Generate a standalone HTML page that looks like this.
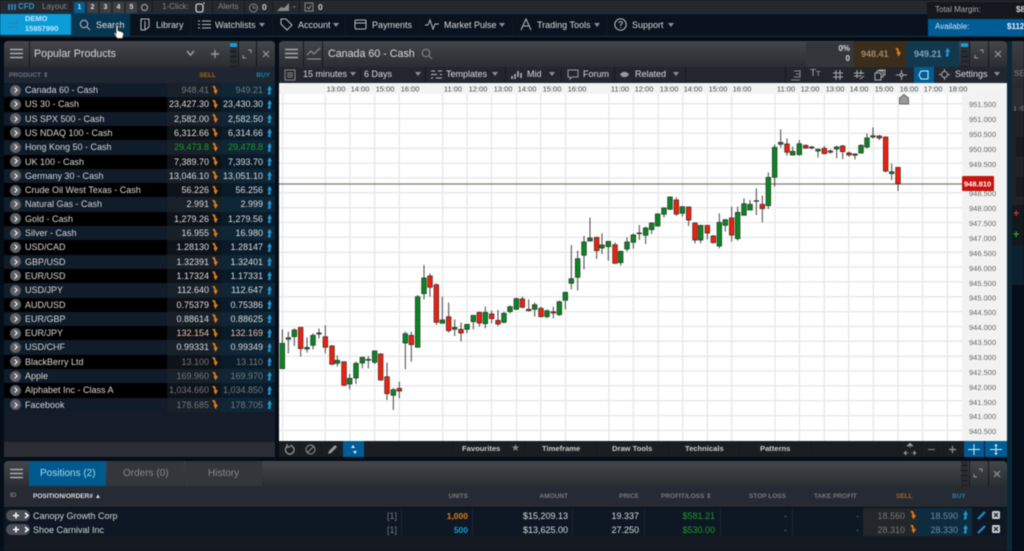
<!DOCTYPE html>
<html lang="en">
<head>
<meta charset="utf-8">
<title>CFD Platform</title>
<style>
html,body{margin:0;padding:0;background:#050d18;}
body{width:1024px;height:551px;overflow:hidden;position:relative;font-family:"Liberation Sans",sans-serif;font-size:9px;color:#ddd;}
#w{position:absolute;left:0;top:0;width:1024px;height:551px;overflow:hidden;filter:blur(.45px);background:#050d18;}
.a{position:absolute;}
.t{position:absolute;white-space:nowrap;line-height:12px;}
.hd{background:linear-gradient(#43464b,#2a2d32);}
.sep{position:absolute;width:1px;background:#15181c;}
svg{position:absolute;overflow:visible;}
.ic{fill:none;stroke:#bbb;stroke-width:1;}
.ar{position:absolute;width:0;height:0;border-left:3px solid transparent;border-right:3px solid transparent;border-top:4px solid #8a9098;}
.num{position:absolute;top:2px;width:11px;height:11px;background:#3c3f44;color:#ddd;font-size:7px;font-weight:bold;line-height:11px;text-align:center;}
.r{position:absolute;left:4px;width:271px;height:14.3px;background:#000;line-height:14px;}
.r.o{background:#101c29;}
.r .bt{position:absolute;left:6px;top:1.6px;width:11px;height:11px;border-radius:50%;background:#5b5f64;}
.r .bt::after{content:"";position:absolute;left:2.6px;top:3.4px;width:3px;height:3px;border:solid #fff;border-width:1.4px 1.4px 0 0;transform:rotate(45deg);}
.r .n{position:absolute;left:21px;top:0;color:#d8d8d8;white-space:nowrap;}
.r .s,.r .b{position:absolute;top:0;width:54px;height:14.3px;text-align:right;box-sizing:border-box;color:#ddd;}
.r .s{left:163px;padding-right:12px;background:#0e1319;}
.r .b{left:217px;padding-right:12px;background:#091b29;}
.r.o .s{background:#182029;}
.r.o .b{background:#0f2636;}
.r .s::after,.p::after{content:"";position:absolute;right:3px;top:2.5px;width:6px;height:9px;background:#d9801c;clip-path:polygon(0 0,45% 0,75% 50%,100% 50%,60% 100%,25% 55%,45% 50%);}
.r .b::after,.q::after{content:"";position:absolute;right:3px;top:2.5px;width:6px;height:9px;background:#1f9ad6;clip-path:polygon(60% 0,100% 50%,75% 50%,75% 100%,30% 100%,45% 50%,20% 50%);}
.g{color:#777 !important;}
.gr{color:#1f9a25 !important;}
.ch{position:absolute;top:441px;height:16px;background:#1a1d22;}
.cap{position:absolute;color:#777;font-size:6.5px;font-weight:bold;line-height:10px;white-space:nowrap;}
.sl{position:absolute;background:#2a2c30;background-image:repeating-linear-gradient(#2a2c30 0,#2a2c30 4px,#16181b 4px,#16181b 5px);}
</style>
</head>
<body>
<div id="w">

<!-- top bar -->
<div class="a" style="left:0;top:0;width:1024px;height:13px;background:#25282d"></div>
<div class="t" style="left:18px;top:1px;color:#2d97cf;font-size:8px;font-weight:bold">CFD</div>
<svg style="left:8px;top:3px" width="9" height="8"><path d="M1 1V7M4 1V7M7 1V7" stroke="#2d97cf" stroke-width="1.5"/></svg>
<div class="t" style="left:42px;top:1px;color:#888;font-size:8px">Layout:</div>
<div class="num" style="left:74px;background:#005f94">1</div>
<div class="num" style="left:87px">2</div>
<div class="num" style="left:100px">3</div>
<div class="num" style="left:113px">4</div>
<div class="num" style="left:126px">5</div>
<svg style="left:139px;top:2px" width="11" height="11"><circle cx="5.5" cy="5.5" r="3" fill="none" stroke="#888" stroke-width="1.5"/></svg>
<div class="t" style="left:162px;top:1px;color:#888;font-size:8px">1-Click:</div>
<svg style="left:195px;top:1px" width="11" height="12"><rect x="1" y="3" width="7" height="8" rx="2" fill="none" stroke="#ccc" stroke-width="1.3"/><path d="M9 1V3" stroke="#ccc"/></svg>
<div class="t" style="left:218px;top:1px;color:#888;font-size:8px">Alerts</div>
<svg style="left:248px;top:2px" width="11" height="11"><circle cx="5.5" cy="6" r="4" fill="none" stroke="#888"/><path d="M5.5 3.5V6H8" stroke="#888" fill="none"/></svg>
<div class="t" style="left:262px;top:1px;color:#ccc;font-size:8.5px;font-weight:bold">0</div>
<svg style="left:276px;top:2px" width="14" height="10"><path d="M1 9L5 5L8 6L13 1V9Z" fill="#888"/></svg>
<div class="t" style="left:293px;top:1px;color:#ccc;font-size:8px">-</div>
<svg style="left:304px;top:2px" width="10" height="10"><rect x="1" y="1" width="8" height="8" fill="none" stroke="#888"/><path d="M3 5L5 7L7 3" fill="none" stroke="#888"/></svg>
<div class="t" style="left:318px;top:1px;color:#ccc;font-size:8.5px;font-weight:bold">0</div>
<div class="sep" style="left:70px;top:0;height:13px"></div>
<div class="sep" style="left:152px;top:0;height:13px"></div>
<div class="sep" style="left:212px;top:0;height:13px"></div>
<div class="sep" style="left:244px;top:0;height:13px"></div>
<div class="sep" style="left:272px;top:0;height:13px"></div>
<div class="sep" style="left:299px;top:0;height:13px"></div>

<!-- nav -->
<div class="a" style="left:0;top:13px;width:1024px;height:1px;background:#0d3a50"></div>
<div class="a" style="left:0;top:14px;width:1024px;height:22px;background:#0a121e"></div>
<div class="a" style="left:0;top:36px;width:1024px;height:1px;background:#0d3a50"></div>
<div class="a" style="left:0;top:37px;width:1024px;height:4px;background:#05090f"></div>
<div class="a" style="left:0;top:14px;width:71px;height:21px;background:#0c9dd9"></div>
<svg style="left:6px;top:18px" width="14" height="14"><path d="M2 5H12L9 2M12 9H2L5 12" fill="none" stroke="#2a86b4" stroke-width="1.2"/></svg>
<div class="t" style="left:25px;top:14px;color:#bfe7f8;font-size:7.5px;font-weight:bold;line-height:10px">DEMO<br>15857990</div>
<div class="a" style="left:71px;top:14px;width:59px;height:22px;background:#07344f"></div>
<svg class="ic" style="left:79px;top:19px" width="12" height="12"><circle cx="5" cy="5" r="3.7"/><path d="M8 8L11 11"/></svg>
<div class="t" style="left:96px;top:19px;color:#e4e4e4">Search</div>
<svg class="ic" style="left:139px;top:18px" width="12" height="13"><path d="M2 1H10V9L6 12H2Z"/><path d="M6 3V12"/></svg>
<div class="t" style="left:156px;top:19px;color:#ddd">Library</div>
<svg class="ic" style="left:198px;top:19px" width="13" height="11"><path d="M0 2H2M4 2H13M0 5.5H2M4 5.5H13M0 9H2M4 9H13"/></svg>
<div class="t" style="left:215px;top:19px;color:#ddd">Watchlists</div><div class="ar" style="left:259px;top:23px"></div>
<svg class="ic" style="left:280px;top:18px" width="13" height="13"><path d="M1 1H6L12 7L7 12L1 6Z"/></svg>
<div class="t" style="left:298px;top:19px;color:#ddd">Account</div><div class="ar" style="left:333px;top:23px"></div>
<svg class="ic" style="left:354px;top:19px" width="13" height="11"><rect x="1" y="1" width="11" height="9" rx="1"/><path d="M1 4H12"/></svg>
<div class="t" style="left:372px;top:19px;color:#ddd">Payments</div>
<svg class="ic" style="left:425px;top:19px" width="14" height="11"><path d="M0 6H3L5 1L8 10L10 5H14"/></svg>
<div class="t" style="left:444px;top:19px;color:#ddd">Market Pulse</div><div class="ar" style="left:499px;top:23px"></div>
<svg class="ic" style="left:520px;top:18px" width="12" height="13"><path d="M1 12L6 1L11 12M3.5 8H8.5"/></svg>
<div class="t" style="left:537px;top:19px;color:#ddd">Trading Tools</div><div class="ar" style="left:594px;top:23px"></div>
<svg class="ic" style="left:614px;top:18px" width="13" height="13"><circle cx="6.5" cy="6.5" r="5.7"/><path d="M4.8 5C5 3.2 8.3 3.2 8.3 5C8.3 6.3 6.5 6.3 6.5 8M6.5 9V10"/></svg>
<div class="t" style="left:632px;top:19px;color:#ddd">Support</div><div class="ar" style="left:668px;top:23px"></div>
<div class="sep" style="left:130px;top:14px;height:22px"></div>
<div class="sep" style="left:190px;top:14px;height:22px"></div>
<div class="sep" style="left:272px;top:14px;height:22px"></div>
<div class="sep" style="left:345px;top:14px;height:22px"></div>
<div class="sep" style="left:418px;top:14px;height:22px"></div>
<div class="sep" style="left:512px;top:14px;height:22px"></div>
<div class="sep" style="left:606px;top:14px;height:22px"></div>

<!-- margin box -->
<div class="a" style="left:927px;top:2px;width:97px;height:17px;background:#14171c"></div>
<div class="a" style="left:928px;top:19px;width:96px;height:17px;background:#005c94"></div>
<div class="t" style="left:935px;top:4px;color:#aaa;font-size:8px">Total Margin:</div>
<div class="t" style="left:1016px;top:4px;color:#ddd;font-size:8px;font-weight:bold">$8</div>
<div class="t" style="left:935px;top:21px;color:#cfe6f5;font-size:8px">Available:</div>
<div class="t" style="left:1007px;top:21px;color:#eef;font-size:8px;font-weight:bold">$112</div>

<!-- right strip -->
<div class="a" style="left:1007px;top:41px;width:5px;height:510px;background:#0c2838"></div>
<div class="a" style="left:1012px;top:41px;width:12px;height:47px;background:linear-gradient(#3b3e43,#27292e)"></div>
<div class="t" style="left:1014px;top:68px;color:#666;font-size:8px;font-weight:bold">SE</div>
<div class="a" style="left:1012px;top:88px;width:12px;height:23px;background:#2a2d32"></div>
<div class="t" style="left:1014px;top:104px;color:#888;font-size:8px">L:9</div>
<div class="a" style="left:1012px;top:111px;width:12px;height:94px;background:#1f2328"></div>
<div class="a" style="left:1016px;top:137px;width:8px;height:20px;background:#16191d"></div>
<div class="a" style="left:1016px;top:177px;width:8px;height:20px;background:#16191d"></div>
<div class="a" style="left:1012px;top:205px;width:12px;height:40px;background:#14171b"></div>
<div class="t" style="left:1013px;top:208px;color:#c23a22;font-size:11px;font-weight:bold">+</div>
<div class="t" style="left:1013px;top:229px;color:#1fa83a;font-size:11px;font-weight:bold">+</div>
<div class="a" style="left:1012px;top:245px;width:12px;height:40px;background:#0d2030"></div>
<div class="a" style="left:1012px;top:285px;width:12px;height:266px;background:#050d18"></div>

<!-- left panel -->
<div class="a" style="left:4px;top:41px;width:271px;height:416px;background:#151c27;border-radius:4px 4px 0 0"></div>
<div class="a hd" style="left:4px;top:41px;width:271px;height:26px;border-radius:4px 4px 0 0"></div>
<svg style="left:10px;top:48px" width="13" height="11"><path d="M0 1.5H13M0 5.5H13M0 9.5H13" stroke="#aaa" stroke-width="1.4"/></svg>
<div class="sep" style="left:29px;top:41px;height:26px"></div>
<div class="t" style="left:34px;top:47px;color:#d8d8d8;font-size:10.7px;line-height:14px">Popular Products</div>
<svg style="left:186px;top:50px" width="9" height="7"><path d="M1 1L4.5 5L8 1" stroke="#9a9a9a" stroke-width="1.6" fill="none"/></svg>
<svg style="left:210px;top:49px" width="10" height="10"><path d="M5 1V9M1 5H9" stroke="#999" stroke-width="1.4"/></svg>
<div class="sl" style="left:230px;top:42px;width:7px;height:25px"></div>
<div class="a" style="left:230px;top:43px;width:7px;height:4px;background:#1a9ad6"></div>
<svg style="left:242px;top:49px" width="10" height="10"><path d="M6 1H9V4M1 6V9H4" stroke="#999" fill="none"/></svg>
<div class="sep" style="left:238px;top:41px;height:26px"></div>
<div class="sep" style="left:256px;top:41px;height:26px"></div>
<svg style="left:262px;top:50px" width="8" height="8"><path d="M1 1L7 7M7 1L1 7" stroke="#999" stroke-width="1.2"/></svg>
<div class="a" style="left:4px;top:67px;width:271px;height:16px;background:#1f2631"></div>
<div class="cap" style="left:9px;top:71px;color:#6d7178">PRODUCT &#8661;</div>
<div class="cap" style="right:808px;top:71px;color:#a8651a">SELL</div>
<div class="cap" style="right:754px;top:71px;color:#1f7fae">BUY</div>

<div class="r o" style="top:83px"><i class="bt"></i><span class="n">Canada 60 - Cash</span><span class="s g">948.41</span><span class="b g">949.21</span></div>
<div class="r" style="top:97.3px"><i class="bt"></i><span class="n">US 30 - Cash</span><span class="s">23,427.30</span><span class="b">23,430.30</span></div>
<div class="r o" style="top:111.6px"><i class="bt"></i><span class="n">US SPX 500 - Cash</span><span class="s">2,582.00</span><span class="b">2,582.50</span></div>
<div class="r" style="top:125.9px"><i class="bt"></i><span class="n">US NDAQ 100 - Cash</span><span class="s">6,312.66</span><span class="b">6,314.66</span></div>
<div class="r o" style="top:140.2px"><i class="bt"></i><span class="n">Hong Kong 50 - Cash</span><span class="s gr">29,473.8</span><span class="b gr">29,478.8</span></div>
<div class="r" style="top:154.5px"><i class="bt"></i><span class="n">UK 100 - Cash</span><span class="s">7,389.70</span><span class="b">7,393.70</span></div>
<div class="r o" style="top:168.8px"><i class="bt"></i><span class="n">Germany 30 - Cash</span><span class="s">13,046.10</span><span class="b">13,051.10</span></div>
<div class="r" style="top:183.1px"><i class="bt"></i><span class="n">Crude Oil West Texas - Cash</span><span class="s">56.226</span><span class="b">56.256</span></div>
<div class="r o" style="top:197.4px"><i class="bt"></i><span class="n">Natural Gas - Cash</span><span class="s">2.991</span><span class="b">2.999</span></div>
<div class="r" style="top:211.7px"><i class="bt"></i><span class="n">Gold - Cash</span><span class="s">1,279.26</span><span class="b">1,279.56</span></div>
<div class="r o" style="top:226px"><i class="bt"></i><span class="n">Silver - Cash</span><span class="s">16.955</span><span class="b">16.980</span></div>
<div class="r" style="top:240.3px"><i class="bt"></i><span class="n">USD/CAD</span><span class="s">1.28130</span><span class="b">1.28147</span></div>
<div class="r o" style="top:254.6px"><i class="bt"></i><span class="n">GBP/USD</span><span class="s">1.32391</span><span class="b">1.32401</span></div>
<div class="r" style="top:268.9px"><i class="bt"></i><span class="n">EUR/USD</span><span class="s">1.17324</span><span class="b">1.17331</span></div>
<div class="r o" style="top:283.2px"><i class="bt"></i><span class="n">USD/JPY</span><span class="s">112.640</span><span class="b">112.647</span></div>
<div class="r" style="top:297.5px"><i class="bt"></i><span class="n">AUD/USD</span><span class="s">0.75379</span><span class="b">0.75386</span></div>
<div class="r o" style="top:311.8px"><i class="bt"></i><span class="n">EUR/GBP</span><span class="s">0.88614</span><span class="b">0.88625</span></div>
<div class="r" style="top:326.1px"><i class="bt"></i><span class="n">EUR/JPY</span><span class="s" style="color:#eebfa8">132.154</span><span class="b" style="color:#eebfa8">132.169</span></div>
<div class="r o" style="top:340.4px"><i class="bt"></i><span class="n">USD/CHF</span><span class="s">0.99331</span><span class="b">0.99349</span></div>
<div class="r" style="top:354.7px"><i class="bt"></i><span class="n">BlackBerry Ltd</span><span class="s g">13.100</span><span class="b g">13.110</span></div>
<div class="r o" style="top:369px"><i class="bt"></i><span class="n">Apple</span><span class="s g">169.960</span><span class="b g">169.970</span></div>
<div class="r" style="top:383.3px"><i class="bt"></i><span class="n">Alphabet Inc - Class A</span><span class="s g">1,034.660</span><span class="b g">1,034.850</span></div>
<div class="r o" style="top:397.6px"><i class="bt"></i><span class="n">Facebook</span><span class="s g">178.685</span><span class="b g">178.705</span></div>
<div class="a" style="left:4px;top:442px;width:271px;height:15px;background:#2a2d33"></div>

<!-- chart panel header -->
<div class="a hd" style="left:279px;top:41px;width:728px;height:26px;border-radius:4px 4px 0 0"></div>
<svg style="left:285px;top:48px" width="13" height="11"><path d="M0 1.5H13M0 5.5H13M0 9.5H13" stroke="#aaa" stroke-width="1.4"/></svg>
<div class="sep" style="left:303px;top:41px;height:26px"></div>
<svg style="left:307px;top:47px" width="14" height="13"><path d="M0 8L4 4L7 7L13 1M0 12H14" stroke="#999" fill="none"/></svg>
<div class="sep" style="left:322px;top:41px;height:26px"></div>
<div class="t" style="left:328px;top:47px;color:#dcdcdc;font-size:10.7px;line-height:14px">Canada 60 - Cash</div>
<svg class="ic" style="left:421px;top:48px;stroke:#888" width="12" height="12"><circle cx="5" cy="5" r="3.7"/><path d="M8 8L11 11"/></svg>
<div class="a" style="left:806px;top:42px;width:48px;height:25px;background:#33363b"></div>
<div class="t" style="right:174px;top:44px;color:#ddd;font-size:8px;font-weight:bold;line-height:10px;text-align:right">0%<br>0</div>
<div class="a" style="left:854px;top:41px;width:52px;height:26px;background:#3b2d1c"></div>
<div class="t" style="left:861px;top:48px;color:#a08870;font-size:9px;font-weight:bold">948.41</div>
<div class="p a" style="left:890px;top:45px;width:14px;height:20px"></div>
<div class="a" style="left:906px;top:41px;width:53px;height:26px;background:#12384d"></div>
<div class="t" style="left:914px;top:48px;color:#7da5bb;font-size:9px;font-weight:bold">949.21</div>
<div class="q a" style="left:939px;top:45px;width:14px;height:20px"></div>
<div class="sl" style="left:961px;top:42px;width:7px;height:25px"></div>
<div class="a" style="left:961px;top:43px;width:7px;height:4px;background:#1a9ad6"></div>
<svg style="left:974px;top:49px" width="10" height="10"><path d="M6 1H9V4M1 6V9H4" stroke="#999" fill="none"/></svg>
<div class="sep" style="left:969px;top:41px;height:26px"></div>
<div class="sep" style="left:988px;top:41px;height:26px"></div>
<svg style="left:994px;top:50px" width="8" height="8"><path d="M1 1L7 7M7 1L1 7" stroke="#999" stroke-width="1.2"/></svg>

<!-- chart toolbar -->
<div class="a" style="left:279px;top:67px;width:728px;height:16px;background:#23272d"></div>
<svg class="ic" style="left:284px;top:69px;stroke:#888" width="12" height="12"><rect x="1" y="1" width="10" height="10"/><path d="M3 4H9M3 6H9M3 8H9"/></svg>
<div class="t" style="left:303px;top:68px;color:#ddd">15 minutes</div><div class="ar" style="left:350px;top:72px"></div>
<div class="sep" style="left:360px;top:67px;height:16px"></div>
<div class="t" style="left:364px;top:68px;color:#ddd">6 Days</div><div class="ar" style="left:415px;top:72px"></div>
<div class="sep" style="left:425px;top:67px;height:16px"></div>
<svg class="ic" style="left:431px;top:69px" width="11" height="11"><path d="M0 2H4M7 2H11M0 5.5H6M9 5.5H11M0 9H2M5 9H11"/></svg>
<div class="t" style="left:446px;top:68px;color:#ddd">Templates</div><div class="ar" style="left:492px;top:72px"></div>
<div class="sep" style="left:505px;top:67px;height:16px"></div>
<svg class="ic" style="left:511px;top:69px" width="12" height="11"><path d="M1 7V10M4 5V10M7 2V8M10 4V9" stroke-width="1.5"/></svg>
<div class="t" style="left:527px;top:68px;color:#ddd">Mid</div><div class="ar" style="left:549px;top:72px"></div>
<div class="sep" style="left:561px;top:67px;height:16px"></div>
<svg class="ic" style="left:567px;top:69px;stroke:#999" width="12" height="11"><path d="M1 1H11V8H5L3 10V8H1Z"/></svg>
<div class="t" style="left:583px;top:68px;color:#ddd">Forum</div>
<div class="sep" style="left:614px;top:67px;height:16px"></div>
<svg style="left:619px;top:70px" width="11" height="9"><path d="M1 4.5C3 1 8 1 10 4.5C8 8 3 8 1 4.5Z" fill="#999"/></svg>
<div class="t" style="left:635px;top:68px;color:#ddd">Related</div><div class="ar" style="left:673px;top:72px"></div>
<div class="sep" style="left:685px;top:67px;height:16px"></div>
<div class="sep" style="left:785px;top:67px;height:16px"></div>
<svg class="ic" style="left:790px;top:69px;stroke:#888" width="11" height="12"><path d="M4 2H10M6 5H10M4 8H10V1M1 11H10"/></svg>
<div class="t" style="left:810px;top:68px;color:#aaa;font-size:10px">T<span style="font-size:7px">T</span></div>
<svg class="ic" style="left:832px;top:69px;stroke:#aaa" width="12" height="12"><path d="M4 1V11M8 1V11M1 4H11M1 8H11"/></svg>
<svg class="ic" style="left:853px;top:69px;stroke:#aaa" width="12" height="12"><path d="M4 1V9M8 1V6M1 4H11M1 7H8M7 10L11 7"/></svg>
<svg class="ic" style="left:874px;top:69px;stroke:#aaa" width="12" height="12"><rect x="1" y="4" width="6" height="7"/><path d="M3 4V2H9V8H7M5 2V1H11V6H9"/></svg>
<svg class="ic" style="left:896px;top:70px;stroke:#aaa" width="11" height="10"><path d="M0 5H4M7 5H11M5.5 0V3M5.5 7V10"/><circle cx="5.5" cy="5" r="1.5"/></svg>
<div class="a" style="left:914px;top:67px;width:20px;height:16px;background:#005c94"></div>
<svg class="ic" style="left:918px;top:70px;stroke:#d8eefb" width="12" height="10"><path d="M3 1H10V9H3L1 5Z"/></svg>
<svg class="ic" style="left:939px;top:69px;stroke:#aaa" width="11" height="11"><circle cx="5.5" cy="5.5" r="3"/><path d="M5.5 0V2M5.5 9V11M0 5.5H2M9 5.5H11"/></svg>
<div class="t" style="left:955px;top:68px;color:#ddd">Settings</div><div class="ar" style="left:994px;top:72px"></div>

<!-- chart -->
<div class="a" style="left:279px;top:83px;width:728px;height:358px;background:#fff"></div>
<div class="a" style="left:279px;top:83px;width:728px;height:11px;background:#f3f3f3"></div>
<div class="a" style="left:962px;top:94px;width:45px;height:347px;background:#f2f2f2"></div>

<svg style="left:0;top:0" width="1024" height="551">
<path fill="none" stroke="#e7e7e7" stroke-width="1.3" d="M279 103.7H962M279 118.6H962M279 133.4H962M279 148.3H962M279 163.1H962M279 178H962M279 192.8H962M279 207.7H962M279 222.5H962M279 237.4H962M279 252.2H962M279 267H962M279 281.9H962M279 296.8H962M279 311.6H962M279 326.5H962M279 341.3H962M279 356.2H962M279 371H962M279 385.9H962M279 400.7H962M279 415.6H962M279 430.4H962"/>
<path fill="none" stroke="#e7e7e7" stroke-width="1.3" d="M282.7 94V441M325.3 94V441M350 94V441M374.7 94V441M399.3 94V441M442.7 94V441M467 94V441M491.5 94V441M516.5 94V441M540.8 94V441M565.6 94V441M608.8 94V441M633.4 94V441M658.2 94V441M682.7 94V441M707.3 94V441M731.7 94V441M775 94V441M799.4 94V441M824.3 94V441M848.7 94V441M873.3 94V441M898 94V441M922.6 94V441M947.3 94V441"/>
<g font-family="Liberation Sans,sans-serif" font-size="7.5" fill="#444" text-anchor="middle">
<text x="336" y="91.5">13:00</text><text x="360" y="91.5">14:00</text><text x="385" y="91.5">15:00</text><text x="410" y="91.5">16:00</text><text x="453" y="91.5">11:00</text><text x="478" y="91.5">12:00</text><text x="503" y="91.5">13:00</text><text x="527" y="91.5">14:00</text><text x="552" y="91.5">15:00</text><text x="577" y="91.5">16:00</text><text x="620" y="91.5">11:00</text><text x="644" y="91.5">12:00</text><text x="669" y="91.5">13:00</text><text x="693" y="91.5">14:00</text><text x="718" y="91.5">15:00</text><text x="742" y="91.5">16:00</text><text x="786" y="91.5">11:00</text><text x="810" y="91.5">12:00</text><text x="835" y="91.5">13:00</text><text x="859" y="91.5">14:00</text><text x="884" y="91.5">15:00</text><text x="909" y="91.5">16:00</text><text x="933" y="91.5">17:00</text><text x="958" y="91.5">18:00</text>
</g>
<g font-family="Liberation Sans,sans-serif" font-size="7.5" fill="#666">
<text x="969" y="107">951.500</text><text x="969" y="122">951.000</text><text x="969" y="137">950.500</text><text x="969" y="152">950.000</text><text x="969" y="167">949.500</text><text x="969" y="196">948.500</text><text x="969" y="211">948.000</text><text x="969" y="226">947.500</text><text x="969" y="241">947.000</text><text x="969" y="256">946.500</text><text x="969" y="271">946.000</text><text x="969" y="286">945.500</text><text x="969" y="300.5">945.000</text><text x="969" y="315">944.500</text><text x="969" y="330">944.000</text><text x="969" y="345">943.500</text><text x="969" y="360">943.000</text><text x="969" y="375">942.500</text><text x="969" y="390">942.000</text><text x="969" y="405">941.500</text><text x="969" y="419">941.000</text><text x="969" y="434">940.500</text>
</g>
<path d="M279 184H962" stroke="#7b7b70" stroke-width="1.2"/>
<path d="M899.5 104V98L904 94.5L908.5 98V104Z" fill="#999" stroke="#666"/>

<g transform="translate(280,230) scale(.33333)" stroke="#2a2a2a" stroke-width="2">
<path fill="none" stroke="#444" stroke-width="3" d="M7 298V417M25 305V370M43 295V348M62 292V380M81 322V368M99 310V358M117 296V325M136 286V370M156 345V405M172 376V410M192 394V468M209 432V478M228 395V462M247 380V415M265 378V415M284 362V402M302 370V452M321 398V510M340 474V540M358 455V505M376 305V418M394 305V395M413 195V352M432 105V208M450 130V200M469 160V285M487 200V280M506 218V308M524 268V318M543 278V334M561 282V310M580 255V298M598 245V290M616 230V295M635 242V280M654 240V288M672 245V280M690 226V250M709 203V240"/>
<path fill="#0b8522" d="M0 340h14V416h-14zM18 323h14V328h-14zM36 300h14V320h-14zM74 352h14V357h-14zM92 316h14V346h-14zM110 309h14V312h-14zM165 391h14V400h-14zM202 445h14V462h-14zM221 400h14V444h-14zM240 382h14V399h-14zM258 388h14V391h-14zM277 363h14V397h-14zM333 479h14V496h-14zM369 311h14V339h-14zM406 200h14V352h-14zM425 144h14V191h-14zM480 270h14V280h-14zM517 292h14V298h-14zM554 283h14V298h-14zM573 256h14V275h-14zM609 247h14V281h-14zM665 250h14V277h-14zM683 230h14V245h-14zM702 206h14V238h-14z"/>
<path fill="#f0200c" d="M55 292h14V356h-14zM129 320h14V352h-14zM149 348h14V403h-14zM185 395h14V466h-14zM295 372h14V450h-14zM314 440h14V491h-14zM351 475h14V483h-14zM387 316h14V344h-14zM443 138h14V172h-14zM462 164h14V277h-14zM499 260h14V302h-14zM536 298h14V309h-14zM591 247h14V279h-14zM628 252h14V266h-14zM647 271h14V282h-14z"/>
</g>

<g transform="translate(500,180) scale(.33333)" stroke="#2a2a2a" stroke-width="2">
<path fill="none" stroke="#444" stroke-width="3" d="M67 350V385M86 358V395M104 368V410M123 380V412M141 388V415M160 380V415M178 362V408M196 335V388M214 195V328M233 212V332M252 168V268M270 113V184M290 170V237M306 160V222M325 183V242M345 188V252M362 212V256M381 172V215M400 160V206M418 135V180M437 140V192M455 128V162M473 100V140M492 82V112M510 50V90M529 52V108M547 78V110M566 80V138M585 127V190M602 135V190M622 135V178M640 165V190M658 100V205M676 117V155M695 80V185M713 80V182"/>
<path fill="#0b8522" d="M97 374h14V388h-14zM134 392h14V410h-14zM171 365h14V404h-14zM189 337h14V361h-14zM207 296h14V310h-14zM226 236h14V292h-14zM245 186h14V226h-14zM263 174h14V183h-14zM299 195h14V204h-14zM318 184h14V200h-14zM355 214h14V248h-14zM374 186h14V207h-14zM393 165h14V187h-14zM411 159h14V161h-14zM430 144h14V166h-14zM448 129h14V149h-14zM466 102h14V138h-14zM485 84h14V103h-14zM503 51h14V88h-14zM540 80h14V100h-14zM595 136h14V180h-14zM651 127h14V198h-14zM669 119h14V136h-14zM706 97h14V176h-14z"/>
<path fill="#f0200c" d="M60 357h14V382h-14zM79 388h14V392h-14zM116 385h14V410h-14zM153 395h14V399h-14zM283 172h14V212h-14zM338 194h14V250h-14zM522 60h14V102h-14zM559 81h14V120h-14zM578 129h14V180h-14zM615 136h14V159h-14zM633 168h14V188h-14zM688 114h14V165h-14z"/>
</g>

<g transform="translate(730,85) scale(.33333)" stroke="#2a2a2a" stroke-width="2">
<path fill="none" stroke="#444" stroke-width="3" d="M42 340V392M60 345V375M79 310V390M97 332V412M115 262V372M134 178V305M152 133V188M171 160V212M188 185V212M208 165V212M227 178V192M245 183V193M264 190V217M283 183V208M301 193V206M320 182V220M338 180V222M357 200V215M375 205V223M393 178V206M411 145V190M429 127V160M448 150V165M467 155V262M485 236V285M504 246V318"/>
<path fill="#0b8522" d="M35 356h14V391h-14zM53 358h14V375h-14zM72 347h14V349h-14zM108 277h14V362h-14zM127 187h14V277h-14zM145 172h14V178h-14zM181 199h14V210h-14zM201 176h14V209h-14zM257 193h14V198h-14zM313 186h14V192h-14zM368 207h14V211h-14zM386 181h14V204h-14zM404 159h14V186h-14zM422 152h14V156h-14zM478 260h14V266h-14z"/>
<path fill="#f0200c" d="M90 358h14V371h-14zM164 177h14V202h-14zM220 181h14V189h-14zM238 186h14V189h-14zM276 190h14V206h-14zM294 198h14V202h-14zM331 183h14V200h-14zM350 204h14V210h-14zM441 153h14V159h-14zM460 156h14V258h-14zM497 247h14V296h-14z"/>
</g>
<rect x="962" y="176" width="32" height="15" rx="1" fill="#c8140f"/>
<text x="964" y="186.5" font-family="Liberation Sans,sans-serif" font-size="7.5" font-weight="bold" fill="#fff">948.810</text>
</svg>

<!-- chart bottom bar -->
<div class="ch" style="left:279px;width:728px"></div>
<svg class="ic" style="left:284px;top:444px;stroke:#999" width="11" height="11"><path d="M3 2.5A4.3 4.3 0 1 0 6 1.5M3 0V3H6" stroke-width="1.2"/></svg>
<svg class="ic" style="left:305px;top:444px;stroke:#999" width="11" height="11"><circle cx="5.5" cy="5.5" r="4.5"/><path d="M2.5 8.5L8.5 2.5"/></svg>
<svg style="left:327px;top:444px" width="11" height="11"><path d="M1 10L2 7L8 1L10 3L4 9Z" fill="#999"/></svg>
<div class="a" style="left:343px;top:441px;width:21px;height:16px;background:#005c94"></div>
<svg style="left:348px;top:444px" width="11" height="11"><path d="M3 4L5 1L7 4ZM5 7L7 10L9 7Z" fill="#e4f2fb"/></svg>
<div class="sep" style="left:299px;top:441px;height:16px"></div>
<div class="sep" style="left:321px;top:441px;height:16px"></div>
<div class="sep" style="left:453px;top:441px;height:16px"></div>
<div class="sep" style="left:525px;top:441px;height:16px"></div>
<div class="sep" style="left:596px;top:441px;height:16px"></div>
<div class="sep" style="left:668px;top:441px;height:16px"></div>
<div class="sep" style="left:739px;top:441px;height:16px"></div>
<div class="sep" style="left:810px;top:441px;height:16px"></div>
<div class="sep" style="left:899px;top:441px;height:16px"></div>
<div class="sep" style="left:921px;top:441px;height:16px"></div>
<div class="sep" style="left:943px;top:441px;height:16px"></div>
<div class="t" style="left:462px;top:443px;color:#ccc;font-size:7.6px;font-weight:bold">Favourites</div>
<div class="t" style="left:511px;top:443px;color:#888;font-size:10px">&#9733;</div>
<div class="t" style="left:542px;top:443px;color:#ccc;font-size:7.6px;font-weight:bold">Timeframe</div>
<div class="t" style="left:612px;top:443px;color:#ccc;font-size:7.6px;font-weight:bold">Draw Tools</div>
<div class="t" style="left:685px;top:443px;color:#ccc;font-size:7.6px;font-weight:bold">Technicals</div>
<div class="t" style="left:760px;top:443px;color:#ccc;font-size:7.6px;font-weight:bold">Patterns</div>
<svg style="left:904px;top:443px" width="12" height="12"><path d="M6 1V5M3 3L6 0L9 3ZM1 10H5M7 10H11M2 8L0 10L2 12ZM10 8L12 10L10 12Z" stroke="#999" fill="#999" stroke-width=".6"/></svg>
<div class="a" style="left:928px;top:449px;width:7px;height:1.3px;background:#888"></div>
<svg style="left:948px;top:445px" width="9" height="9"><path d="M4.5 1V8M1 4.5H8" stroke="#888" stroke-width="1.4"/></svg>
<div class="a" style="left:964px;top:441px;width:43px;height:16px;background:#005c94"></div>
<svg style="left:968px;top:444px" width="12" height="11"><path d="M6 0V11M0 5.5H12" stroke="#d0e8f6"/></svg>
<svg style="left:990px;top:444px" width="12" height="11"><path d="M6 0V11M0 5.5H12" stroke="#d0e8f6"/><path d="M4 2H8L6 0ZM4 9H8L6 11Z" fill="#d0e8f6"/></svg>
<div class="sep" style="left:984px;top:441px;height:16px"></div>

<!-- positions panel -->
<div class="a" style="left:4px;top:461px;width:1003px;height:90px;background:#151a22;border-radius:4px 4px 0 0"></div>
<div class="a hd" style="left:4px;top:461px;width:1003px;height:25px;border-radius:4px 4px 0 0"></div>
<svg style="left:10px;top:468px" width="13" height="11"><path d="M0 1.5H13M0 5.5H13M0 9.5H13" stroke="#aaa" stroke-width="1.4"/></svg>
<div class="a" style="left:29px;top:461px;width:77px;height:25px;background:#005a8e"></div>
<div class="t" style="left:40px;top:467px;color:#a8d8f2;font-size:10px;line-height:14px">Positions (2)</div>
<div class="a" style="left:107px;top:461px;width:77px;height:25px;background:#33363b"></div>
<div class="t" style="left:123px;top:467px;color:#888;font-size:10px;line-height:14px">Orders (0)</div>
<div class="a" style="left:185px;top:461px;width:77px;height:25px;background:#33363b"></div>
<div class="t" style="left:208px;top:467px;color:#888;font-size:10px;line-height:14px">History</div>
<div class="sl" style="left:961px;top:461px;width:7px;height:25px"></div>
<svg style="left:973px;top:468px" width="10" height="10"><path d="M6 1H9V4M1 6V9H4" stroke="#999" fill="none"/></svg>
<div class="sep" style="left:969px;top:461px;height:25px"></div>
<div class="sep" style="left:988px;top:461px;height:25px"></div>
<svg style="left:993px;top:470px" width="8" height="8"><path d="M1 1L7 7M7 1L1 7" stroke="#999" stroke-width="1.2"/></svg>

<div class="a" style="left:4px;top:486px;width:1003px;height:21px;background:#262b33"></div>
<div class="a" style="left:4px;top:507px;width:1003px;height:1px;background:#0b0e12"></div>
<div class="cap" style="left:10px;top:491px">ID</div>
<div class="cap" style="left:33px;top:492px;color:#ddd">POSITION/ORDER# &#9650;</div>
<div class="cap" style="right:556px;top:492px">UNITS</div>
<div class="cap" style="right:456px;top:492px">AMOUNT</div>
<div class="cap" style="right:385px;top:492px">PRICE</div>
<div class="cap" style="left:661px;top:492px">PROFIT/LOSS &#8661;</div>
<div class="cap" style="left:749px;top:492px">STOP LOSS</div>
<div class="cap" style="left:814px;top:492px">TAKE PROFIT</div>
<div class="cap" style="left:896px;top:492px;color:#a8651a">SELL</div>
<div class="cap" style="left:952px;top:492px;color:#1f7fae">BUY</div>

<div class="a" style="left:4px;top:508px;width:1003px;height:28px;background:#0d1824"></div>
<div class="a" style="left:863px;top:508px;width:54px;height:28px;background:#23262a"></div>
<div class="a" style="left:917px;top:508px;width:55px;height:28px;background:#0e2c40"></div>
<div class="sep" style="left:401px;top:508px;height:28px;background:#1b2632"></div>
<div class="sep" style="left:472px;top:508px;height:28px;background:#1b2632"></div>
<div class="sep" style="left:572px;top:508px;height:28px;background:#1b2632"></div>
<div class="sep" style="left:644px;top:508px;height:28px;background:#1b2632"></div>
<div class="sep" style="left:720px;top:508px;height:28px;background:#1b2632"></div>
<div class="sep" style="left:792px;top:508px;height:28px;background:#1b2632"></div>

<div class="a" style="left:6px;top:510px;width:24px;height:11px;border-radius:6px;background:#4a4e54"></div>
<div class="a" style="left:6px;top:524px;width:24px;height:11px;border-radius:6px;background:#4a4e54"></div>
<svg style="left:6px;top:510px" width="24" height="11"><path d="M10 5.5H16M13 2.5V8.5" transform="translate(-3,0)" stroke="#fff" stroke-width="1.5"/><path d="M23 3L26 5.5L23 8" transform="translate(-4,0)" stroke="#fff" stroke-width="1.5" fill="none"/></svg>
<svg style="left:6px;top:524px" width="24" height="11"><path d="M10 5.5H16M13 2.5V8.5" transform="translate(-3,0)" stroke="#fff" stroke-width="1.5"/><path d="M23 3L26 5.5L23 8" transform="translate(-4,0)" stroke="#fff" stroke-width="1.5" fill="none"/></svg>
<div class="t" style="left:33px;top:509.5px;color:#d8d8d8">Canopy Growth Corp</div>
<div class="t" style="left:33px;top:523.5px;color:#d8d8d8">Shoe Carnival Inc</div>
<div class="t" style="right:627px;top:509.5px;color:#777">[1]</div>
<div class="t" style="right:627px;top:523.5px;color:#777">[1]</div>
<div class="t" style="right:556px;top:509.5px;color:#e07a1a;font-weight:bold;font-size:8.5px">1,000</div>
<div class="t" style="right:556px;top:523.5px;color:#1a9ad6;font-weight:bold;font-size:8.5px">500</div>
<div class="t" style="right:456px;top:509.5px;color:#ddd">$15,209.13</div>
<div class="t" style="right:456px;top:523.5px;color:#ddd">$13,625.00</div>
<div class="t" style="right:385px;top:509.5px;color:#ddd">19.337</div>
<div class="t" style="right:385px;top:523.5px;color:#ddd">27.250</div>
<div class="t" style="right:309px;top:509.5px;color:#1f9a25">$581.21</div>
<div class="t" style="right:309px;top:523.5px;color:#1f9a25">$530.00</div>
<div class="t" style="right:237px;top:509.5px;color:#a8651a">-</div>
<div class="t" style="right:237px;top:523.5px;color:#a8651a">-</div>
<div class="t" style="right:165px;top:509.5px;color:#1f9a25">-</div>
<div class="t" style="right:165px;top:523.5px;color:#1f9a25">-</div>
<div class="t" style="right:119px;top:509.5px;color:#777">18.560</div>
<div class="t" style="right:119px;top:523.5px;color:#777">28.310</div>
<div class="t" style="right:66px;top:509.5px;color:#6f8a9c">18.590</div>
<div class="t" style="right:66px;top:523.5px;color:#6f8a9c">28.330</div>
<div class="p a" style="left:906px;top:508px;width:13px;height:14px"></div>
<div class="p a" style="left:906px;top:522px;width:13px;height:14px"></div>
<div class="q a" style="left:958px;top:508px;width:13px;height:14px"></div>
<div class="q a" style="left:958px;top:522px;width:13px;height:14px"></div>
<svg style="left:977px;top:510px" width="10" height="10"><path d="M1 9L8 2" stroke="#1f8fca" stroke-width="2.2"/></svg>
<svg style="left:977px;top:524px" width="10" height="10"><path d="M1 9L8 2" stroke="#1f8fca" stroke-width="2.2"/></svg>
<svg style="left:992px;top:511px" width="8" height="8"><rect width="8" height="8" rx="1.5" fill="#cfd2d5"/><path d="M2 2L6 6M6 2L2 6" stroke="#222" stroke-width="1.3"/></svg>
<svg style="left:992px;top:525px" width="8" height="8"><rect width="8" height="8" rx="1.5" fill="#cfd2d5"/><path d="M2 2L6 6M6 2L2 6" stroke="#222" stroke-width="1.3"/></svg>

<!-- hand cursor -->
<svg style="left:113px;top:24px" width="12" height="16"><path d="M3 1.5C3 .5 5 .5 5 1.5V6.5L9.5 8C11 8.5 10.8 10 10.5 11.5L9.5 14.5H4L1 9.5C.6 8.5 1.8 8 2.5 8.6L3 9.5Z" fill="#fff" stroke="#222" stroke-width=".8"/></svg>

</div>
</body>
</html>
